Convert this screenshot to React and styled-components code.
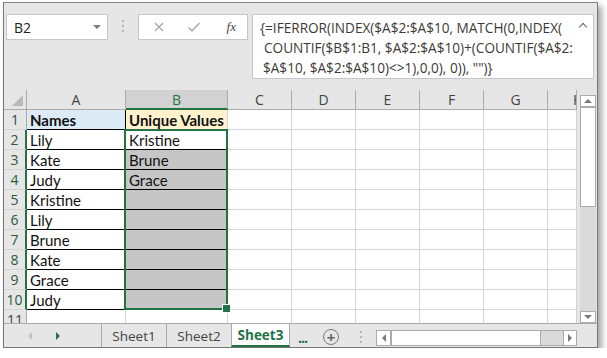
import React from 'react';
import styled, { createGlobalStyle } from 'styled-components';

const GREEN = '#217346';

const Global = createGlobalStyle`
  html, body { margin: 0; padding: 0; background: #fff; }
  body { font-family: "Open Sans", "Noto Sans", sans-serif; }
  * { box-sizing: border-box; }
`;

const Window = styled.div`
  margin: 2px 0 0 3px;
  width: 595px;
  height: 346px;
  border: 1px solid #767676;
  border-top-color: #7c8a7e;
  background: #e6e6e6;
  box-shadow: 4px 4px 6px rgba(0, 0, 0, 0.35);
  display: flex;
  flex-direction: column;
  overflow: hidden;
`;

// formula bar area
const Toolbar = styled.div`
  height: 87px;
  flex: none;
  display: flex;
  align-items: flex-start;
  padding: 11px 0 0 2px;
`;

const NameBox = styled.div`
  width: 102px;
  height: 26px;
  background: #fff;
  border: 1px solid #c6c6c6;
  display: flex;
  align-items: center;
  justify-content: space-between;
  padding: 0 6px 0 7px;
  font-size: 14px;
  color: #222;
`;

const DropArrow = styled.span`
  width: 0;
  height: 0;
  border-left: 4px solid transparent;
  border-right: 4px solid transparent;
  border-top: 4px solid #7a7a7a;
`;

const VDots = styled.div`
  margin: 6px 0 0 14px;
  width: 2px;
  display: flex;
  flex-direction: column;
  gap: 3px;
  span {
    width: 2px;
    height: 2px;
    background: #b4b4b4;
  }
`;

const FxBox = styled.div`
  margin-left: 14px;
  width: 110px;
  height: 26px;
  background: #fff;
  border: 1px solid #c6c6c6;
  display: flex;
  align-items: center;
  padding: 0 11px 0 14px;
  color: #a6a6a6;
  svg { display: block; }
`;

const Fx = styled.span`
  margin-left: auto;
  font-family: "Liberation Serif", serif;
  font-style: italic;
  font-size: 13px;
  color: #444;
`;

const FormulaBox = styled.div`
  margin-left: 4px;
  width: 342px;
  height: 65px;
  background: #fff;
  border: 1px solid #c6c6c6;
  position: relative;
  padding: 3px 0 0 7px;
  font-size: 13.6px;
  line-height: 20px;
  color: #3c3a36;
  white-space: pre;
`;

const FLine = styled.div`
  padding-left: ${p => p.indent || 0}px;
`;

const Caret = styled.span`
  position: absolute;
  right: 7px;
  top: 9px;
  width: 6px;
  height: 6px;
  border-left: 1.5px solid #666;
  border-top: 1.5px solid #666;
  transform: rotate(45deg);
`;

// grid
const GridArea = styled.div`
  flex: none;
  height: 233px;
  display: flex;
`;

const Sheet = styled.div`
  position: relative;
  width: 573px;
  height: 233px;
  overflow: hidden;
  background: #fff;
  display: grid;
  grid-template-columns: 23px 99px 102px repeat(5, 64px) 29px;
  grid-auto-rows: 20px;
  font-family: Lato, "Open Sans", sans-serif;
  font-size: 15px;
`;

const Corner = styled.div`
  background: #e6e6e6;
  border-right: 1px solid #ababab;
  border-bottom: 1px solid #ababab;
  position: relative;
  &::after {
    content: '';
    position: absolute;
    right: 3px;
    bottom: 3px;
    border-left: 11px solid transparent;
    border-bottom: 11px solid #b8b8b8;
  }
`;

const ColHead = styled.div`
  background: ${p => (p.sel ? '#d2d2d2' : '#e6e6e6')};
  color: ${p => (p.sel ? GREEN : '#444')};
  border-right: 1px solid #ababab;
  border-bottom: ${p => (p.sel ? `2px solid ${GREEN}` : '1px solid #ababab')};
  font-family: "Open Sans", sans-serif;
  font-size: 14px;
  display: flex;
  align-items: center;
  justify-content: ${p => (p.clipped ? 'flex-start' : 'center')};
  padding-left: ${p => (p.clipped ? 25 : 0)}px;
  overflow: hidden;
  white-space: nowrap;
`;

const RowHead = styled.div`
  background: #e6e6e6;
  color: ${p => (p.sel ? '#2a5a3a' : '#444')};
  border-right: ${p => (p.sel ? `2px solid ${GREEN}` : '1px solid #ababab')};
  border-bottom: 1px solid #d4d4d4;
  font-family: "Open Sans", sans-serif;
  font-size: 14px;
  display: flex;
  align-items: center;
  justify-content: center;
`;

const Cell = styled.div`
  background: ${p => p.bg || '#fff'};
  border-right: 1px solid ${p => (p.boxed ? '#000' : '#d4d4d4')};
  border-bottom: 1px solid ${p => (p.boxed ? '#000' : '#d4d4d4')};
  font-weight: ${p => (p.bold ? 700 : 400)};
  color: #111;
  padding: 1px 0 0 3px;
  display: flex;
  align-items: center;
  white-space: nowrap;
  overflow: hidden;
`;

const Selection = styled.div`
  position: absolute;
  left: 120px;
  top: 39px;
  width: 104px;
  height: 181px;
  border: 2px solid ${GREEN};
  pointer-events: none;
  &::after {
    content: '';
    position: absolute;
    right: -5px;
    bottom: -5px;
    width: 7px;
    height: 7px;
    background: ${GREEN};
    border: 1px solid #fff;
  }
`;

const VScroll = styled.div`
  flex: 1;
  display: flex;
  flex-direction: column;
  padding: 5px 1px 0 3px;
`;

const SBtn = styled.div`
  flex: none;
  width: ${p => p.w || 16}px;
  height: ${p => p.h || 16}px;
  background: #fff;
  border: 1px solid #ababab;
  display: flex;
  align-items: center;
  justify-content: center;
`;

const Tri = styled.span`
  width: 0;
  height: 0;
  ${p => p.dir === 'up' && `border-left:4px solid transparent;border-right:4px solid transparent;border-bottom:4px solid ${p.c};`}
  ${p => p.dir === 'down' && `border-left:4px solid transparent;border-right:4px solid transparent;border-top:4px solid ${p.c};`}
  ${p => p.dir === 'left' && `border-top:4px solid transparent;border-bottom:4px solid transparent;border-right:4px solid ${p.c};`}
  ${p => p.dir === 'right' && `border-top:4px solid transparent;border-bottom:4px solid transparent;border-left:4px solid ${p.c};`}
`;

const Thumb = styled.div`
  flex: none;
  width: ${p => p.w || 16}px;
  height: ${p => p.h || 16}px;
  background: #fff;
  border: 1px solid #ababab;
`;

const Track = styled.div`
  flex: 1;
  background: #dadada;
`;

// sheet tabs
const TabBar = styled.div`
  flex: 1;
  display: flex;
  align-items: stretch;
  border-top: 1px solid #ababab;
  font-family: "Open Sans", sans-serif;
  font-size: 13.5px;
`;

const Nav = styled.div`
  width: 97px;
  display: flex;
  align-items: center;
  gap: 24px;
  padding-left: 24px;
`;

const Tab = styled.div`
  width: ${p => p.w}px;
  border-left: 1px solid #ababab;
  border-right: ${p => (p.last ? '1px solid #ababab' : 'none')};
  background: ${p => (p.active ? '#fff' : 'transparent')};
  border-bottom: ${p => (p.active ? `2px solid ${GREEN}` : 'none')};
  color: ${p => (p.active ? GREEN : '#444')};
  font-weight: ${p => (p.active ? 700 : 400)};
  display: flex;
  align-items: center;
  justify-content: center;
`;

const More = styled.div`
  margin-left: 8px;
  width: 10px;
  display: flex;
  align-items: center;
  color: ${GREEN};
  font-weight: 700;
  font-size: 14px;
  letter-spacing: -1px;
  padding-top: 4px;
`;

const AddBtn = styled.div`
  margin: 5px 0 0 15px;
  width: 16px;
  height: 16px;
  border: 1px solid #7a7a7a;
  border-radius: 50%;
  display: flex;
  align-items: center;
  justify-content: center;
  color: #666;
  font-size: 15px;
  line-height: 1;
  font-weight: 700;
`;

const TabDots = styled(VDots)`
  margin: 7px 0 0 21px;
`;

const HScroll = styled.div`
  margin: 6px 0 0 14px;
  width: 201px;
  height: 16px;
  display: flex;
`;

const HTrack = styled.div`
  flex: 1;
  background: #dadada;
  border-top: 1px solid #ababab;
  border-bottom: 1px solid #ababab;
`;

const cols = ['A', 'B', 'C', 'D', 'E', 'F', 'G', 'H'];
const names = ['Lily', 'Kate', 'Judy', 'Kristine', 'Lily', 'Brune', 'Kate', 'Grace', 'Judy'];
const unique = ['Kristine', 'Brune', 'Grace'];

export default function App() {
  const rows = [];
  for (let r = 1; r <= 11; r++) {
    const sel = r >= 2 && r <= 10;
    rows.push(<RowHead key={`h${r}`} sel={sel}>{r}</RowHead>);
    if (r === 1) {
      rows.push(<Cell key="a1" bg="#ddebf7" bold boxed>Names</Cell>);
      rows.push(<Cell key="b1" bg="#fff2cc" bold>Unique Values</Cell>);
    } else if (sel) {
      rows.push(<Cell key={`a${r}`} boxed>{names[r - 2]}</Cell>);
      rows.push(
        <Cell key={`b${r}`} boxed bg={r === 2 ? '#fff' : '#c6c6c6'}>
          {unique[r - 2] || ''}
        </Cell>
      );
    } else {
      rows.push(<Cell key={`a${r}`} />);
      rows.push(<Cell key={`b${r}`} />);
    }
    for (let c = 2; c < cols.length; c++) rows.push(<Cell key={`${cols[c]}${r}`} />);
  }

  return (
    <>
      <Global />
      <Window>
        <Toolbar>
          <NameBox>
            B2
            <DropArrow />
          </NameBox>
          <VDots><span /><span /><span /></VDots>
          <FxBox>
            <svg width="12" height="12" viewBox="0 0 12 12">
              <path d="M2 2 L10 10 M10 2 L2 10" stroke="#a6a6a6" strokeWidth="1.3" />
            </svg>
            <svg width="14" height="12" viewBox="0 0 14 12" style={{ marginLeft: 22 }}>
              <path d="M1.5 6.5 L5 10 L12.5 2" stroke="#a6a6a6" strokeWidth="1.4" fill="none" />
            </svg>
            <Fx>fx</Fx>
          </FxBox>
          <FormulaBox>
            <FLine>{'{=IFERROR(INDEX($A$2:$A$10, MATCH(0,INDEX('}</FLine>
            <FLine indent={4}>{'COUNTIF($B$1:B1, $A$2:$A$10)+(COUNTIF($A$2:'}</FLine>
            <FLine indent={3}>{'$A$10, $A$2:$A$10)<>1),0,0), 0)), "")}'}</FLine>
            <Caret />
          </FormulaBox>
        </Toolbar>

        <GridArea>
          <Sheet>
            <Corner />
            {cols.map(c => (
              <ColHead key={c} sel={c === 'B'} clipped={c === 'H'}>{c}</ColHead>
            ))}
            {rows}
            <Selection />
          </Sheet>
          <VScroll>
            <SBtn h={12}><Tri dir="up" c="#7a7a7a" /></SBtn>
            <Thumb h={100} />
            <Track />
            <SBtn h={12}><Tri dir="down" c="#7a7a7a" /></SBtn>
          </VScroll>
        </GridArea>

        <TabBar>
          <Nav>
            <Tri dir="left" c="#c4c4c4" />
            <Tri dir="right" c={GREEN} />
          </Nav>
          <Tab w={65}>Sheet1</Tab>
          <Tab w={65}>Sheet2</Tab>
          <Tab w={59} active last>Sheet3</Tab>
          <More>...</More>
          <AddBtn>+</AddBtn>
          <TabDots><span /><span /><span /></TabDots>
          <HScroll>
            <SBtn w={15} h={16}><Tri dir="left" c="#7a7a7a" /></SBtn>
            <Thumb w={150} h={16} />
            <HTrack />
            <SBtn w={14} h={16}><Tri dir="right" c="#7a7a7a" /></SBtn>
          </HScroll>
        </TabBar>
      </Window>
    </>
  );
}
